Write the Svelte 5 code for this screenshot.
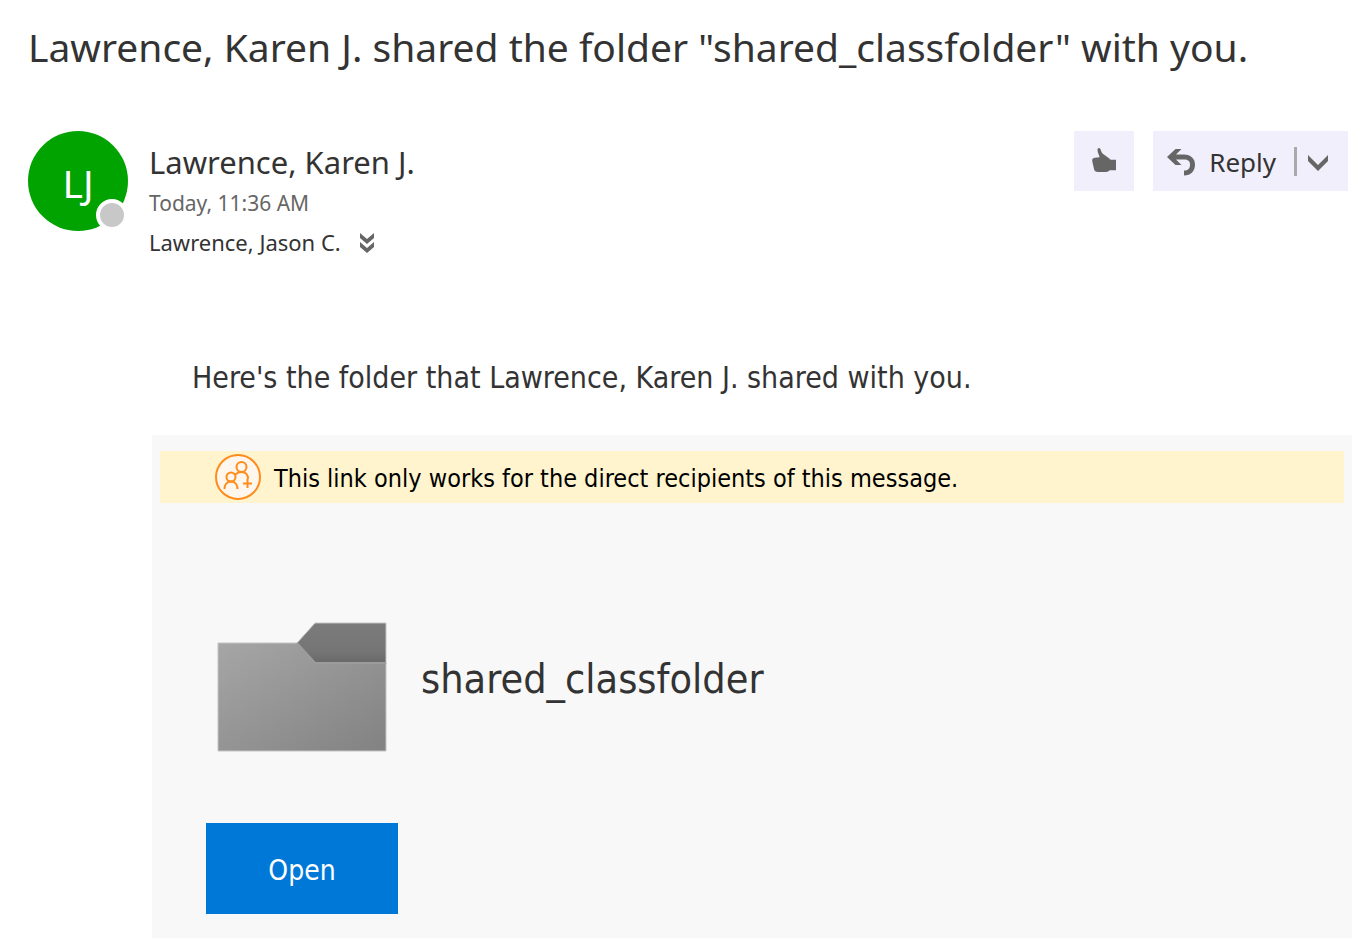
<script lang="ts">
  const sender = { name: 'Lawrence, Karen J.', initials: 'LJ' };
  const recipient = 'Lawrence, Jason C.';
  const sent = 'Today, 11:36 AM';
  const folder = 'shared_classfolder';

  let liked = $state(false);
</script>

<main class="message">
  <h1>{sender.name} shared the folder "{folder}" with you.</h1>

  <header class="header">
    <div class="avatar">
      {sender.initials}
      <span class="presence"></span>
    </div>

    <div class="details">
      <div class="sender">{sender.name}</div>
      <div class="sent">{sent}</div>
      <div class="recipients">
        {recipient}
        <button class="expand" aria-label="Show all recipients">
          <svg width="16" height="20" viewBox="0 0 16 20">
            <path d="M1 0v5l7 6 7-6V0L8 6zM1 9v5l7 6 7-6V9l-7 6z" fill="#666" />
          </svg>
        </button>
      </div>
    </div>

    <div class="actions">
      <button class="action like" aria-label="Like" aria-pressed={liked} onclick={() => (liked = !liked)}>
        <svg width="24" height="28" viewBox="0 0 24 28">
          <path
            d="M5.500 3C5.500 1.700 6 1 6.800 1c1 0 1.700.8 2.100 2.200.4 1.800 1.200 3 2.600 4l5.500 4c1.200.9 1.500 1.600 2.500 1.600H24v10.400h-5.500c-1.500 0-1.800 1.800-5.500 1.800H6c-2.300 0-3.500-.8-4-3L.3 14.500C-.1 12.200.8 11 3 10.800l4.500-.5C7.500 8 5.500 6.500 5.500 3z"
            fill="#666"
          />
        </svg>
      </button>
      <div class="action reply-group">
        <button class="reply">
          <svg width="28" height="30" viewBox="0 0 28 30">
            <path d="M0 11 8.500 3h6L9 8.500h8C24 8.500 28 13 28 18.500 28 25 24 29.500 17 29.500v-5c4 0 6-2.200 6-5.800s-2-5.200-6-5.200H9l5.500 5.500h-6z" fill="#666" />
          </svg>
          <span>Reply</span>
        </button>
        <span class="divider"></span>
        <button class="more" aria-label="More reply options">
          <svg width="20" height="16" viewBox="0 0 20 16">
            <path d="M0 0v6l10 10 10-10V0L10 10z" fill="#666" />
          </svg>
        </button>
      </div>
    </div>
  </header>

  <section class="body">
    <p class="intro">Here's the folder that {sender.name} shared with you.</p>

    <div class="card">
      <div class="notice">
        <svg width="48" height="48" viewBox="0 0 48 48" fill="none" stroke="#ff8c1a" stroke-width="2">
          <circle cx="24" cy="24" r="22" fill="#fff6ee" />
          <circle cx="27.500" cy="14" r="5" />
          <circle cx="17" cy="24" r="4.500" />
          <path d="M10.500 36c0-4.500 2.500-7.500 6.500-7.500s6.500 3 6.500 7.500M21.500 21.500c1.500-1.700 3.200-2.500 6-2.500 3.800 0 6.500 2.500 6.500 7" />
          <path d="M33.500 26v9M29 30.500h9" />
        </svg>
        <span>This link only works for the direct recipients of this message.</span>
      </div>

      <div class="folder">
        <svg width="170" height="130" viewBox="0 0 170 130">
          <defs>
            <linearGradient id="front" x1="0" y1="0" x2="1" y2="1">
              <stop offset="0" stop-color="#a6a6a6" />
              <stop offset="1" stop-color="#828282" />
            </linearGradient>
            <linearGradient id="tab" x1="0" y1="0" x2="0" y2="1">
              <stop offset="0" stop-color="#7b7b7b" />
              <stop offset="0.700" stop-color="#757575" />
              <stop offset="1" stop-color="#676767" />
            </linearGradient>
          </defs>
          <path d="M80 21 98 1h71v41H90z" fill="url(#tab)" stroke="#c4c4c4" />
          <path d="M1 21h79l18 20h71v88H1z" fill="url(#front)" />
          <path d="M169 41v88H1V21h79" fill="none" stroke="#c4c4c4" />
          <path d="M80 21l18 20h71" fill="none" stroke="#9c9c9c" stroke-width="2" />
        </svg>
        <span>{folder}</span>
      </div>

      <a class="open" href="#open">Open</a>
    </div>
  </section>
</main>

<style>
  :global(body) {
    margin: 0;
    background: #fff;
  }

  .message {
    padding: 15px 18px 0 28px;
    color: #333;
    font-family: 'Noto Sans', sans-serif;
  }

  h1 {
    margin: 0;
    font-size: 39px;
    font-weight: 400;
    line-height: 64px;
  }

  .header {
    display: flex;
    align-items: flex-start;
    margin-top: 52px;
    padding-right: 4px;
  }

  .avatar {
    position: relative;
    width: 100px;
    height: 100px;
    border-radius: 50%;
    background: #00a300;
    color: #fff;
    font-size: 39px;
    line-height: 104px;
    text-align: center;
  }

  .presence {
    position: absolute;
    right: 0;
    bottom: 0;
    width: 24px;
    height: 24px;
    border: 4px solid #fff;
    border-radius: 50%;
    background: #c8c8c8;
  }

  .details {
    flex: 1;
    padding: 10px 0 0 21px;
  }

  .sender {
    font-size: 31px;
    line-height: 43px;
  }

  .sent {
    color: #666;
    font-size: 21px;
    line-height: 39px;
  }

  .recipients {
    display: flex;
    align-items: center;
    gap: 18px;
    font-size: 22px;
    line-height: 39px;
  }

  button {
    display: flex;
    align-items: center;
    padding: 0;
    border: 0;
    background: none;
    color: inherit;
    font: inherit;
    cursor: pointer;
  }

  .actions {
    display: flex;
    gap: 19px;
  }

  .action {
    height: 60px;
    background: #f1effc;
  }

  .like {
    justify-content: center;
    width: 60px;
  }

  .reply-group {
    display: flex;
    align-items: center;
    gap: 11px;
    padding: 0 20px 0 14px;
  }

  .reply {
    gap: 14px;
    font-size: 26px;
  }

  .reply span {
    padding-top: 2px;
  }

  .divider {
    width: 3px;
    height: 29px;
    margin-left: 7px;
    background: #aaa;
  }

  .more {
    padding-top: 4px;
  }

  .body {
    margin-left: 124px;
    font-family: 'DejaVu Sans Condensed', 'DejaVu Sans', sans-serif;
  }

  .intro {
    margin: 96px 0 37px 40px;
    font-size: 30px;
    line-height: 40px;
  }

  .card {
    padding: 16px 8px 24px;
    background: #f8f8f8;
  }

  .notice {
    display: flex;
    align-items: center;
    gap: 12px;
    padding: 2px 54px;
    background: #fff4ce;
    color: #000;
    font-size: 25px;
  }

  .notice span {
    padding-top: 2px;
  }

  .folder {
    display: flex;
    align-items: center;
    gap: 34px;
    margin: 119px 0 71px 57px;
    font-size: 41px;
  }

  .folder span {
    padding-bottom: 16px;
  }

  .open {
    display: block;
    width: 192px;
    padding-top: 4px;
    margin-left: 46px;
    background: #0078d7;
    color: #fff;
    font-size: 28px;
    line-height: 87px;
    text-align: center;
    text-decoration: none;
  }
</style>
